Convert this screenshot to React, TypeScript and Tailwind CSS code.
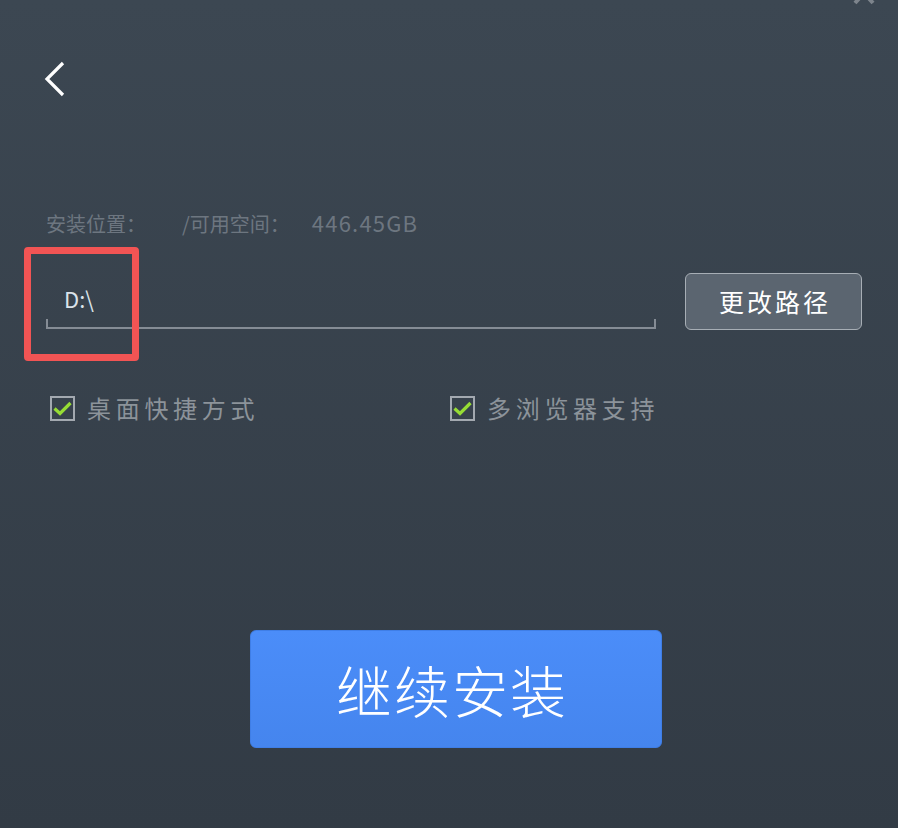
const font = { fontFamily: '"Noto Sans CJK SC", "Noto Sans", sans-serif' };

const Check = ({ label }: { label: string }) => (
  <div className="flex items-center">
    <span className="w-[25px] h-[25px] border-2 border-[#a3a9b0] flex items-center justify-center">
      <svg width="19" height="15" viewBox="0 0 19 15">
        <path d="M1.5 7.5 L7 12.5 L17.5 2" fill="none" stroke="#96dc35" strokeWidth="3.2" />
      </svg>
    </span>
    <span className="ml-[12px] text-[24px] leading-[28px] tracking-[4.7px] text-[#8c939a]">{label}</span>
  </div>
);

const App = () => {
  return (
    <div
      className="relative w-[898px] h-[828px] overflow-hidden bg-linear-to-b from-[#3c4752] to-[#323b45]"
      style={font}
    >
      {/* close button, mostly cut off */}
      <svg className="absolute left-[852px] top-[-18px]" width="24" height="24" viewBox="0 0 24 24">
        <path d="M3 1 L21 21 M21 1 L3 21" stroke="#7d848c" strokeWidth="4" />
      </svg>

      <div className="pl-[46px] pt-[61px]">
        <svg className="-ml-[2px]" width="22" height="36" viewBox="0 0 22 36">
          <path d="M19 2 L3 18 L19 34" fill="none" stroke="#ffffff" strokeWidth="3.2" />
        </svg>

        <div className="mt-[114px] h-[26px] text-[20px] leading-[26px] text-[#6d7680] whitespace-pre">
          安装位置：<span className="ml-[36px]">/可用空间：</span>
          <span className="ml-[22px] text-[22px] leading-[20px] tracking-[1.2px]">446.45GB</span>
        </div>

        <div className="mt-[36px] flex items-start">
          <div className="relative w-[610px] h-[56px]">
            <div className="pl-[18px] pt-[11px] text-[22px] leading-[28px] text-[#dbe3ea]">D:\</div>
            <div className="absolute left-0 right-0 top-[46px] h-[10px] border-l-2 border-r-2 border-b-2 border-[#858c95]" />
          </div>
          <button className="ml-[29px] w-[177px] h-[57px] rounded-[6px] border border-[#a7aeb5] bg-[#5b6570] text-white text-[25px] tracking-[3px] pl-[3px]">
            更改路径
          </button>
        </div>

        <div className="mt-[64px] flex pl-[4px]">
          <div className="w-[400px]">
            <Check label="桌面快捷方式" />
          </div>
          <Check label="多浏览器支持" />
        </div>
      </div>

      <div className="mt-[208px] flex pl-[250px]">
        <button className="w-[412px] h-[118px] rounded-[6px] border border-[#3f7ee6] bg-linear-to-b from-[#4b8df9] to-[#4585ee] text-white text-[56px] tracking-[2px] pr-[8px] font-light">
          继续安装
        </button>
      </div>

      {/* red annotation */}
      <div className="absolute left-[24px] top-[247px] w-[115px] h-[114px] border-[7px] border-[#f25454] rounded-[4px]" />
    </div>
  );
};

export default App;
